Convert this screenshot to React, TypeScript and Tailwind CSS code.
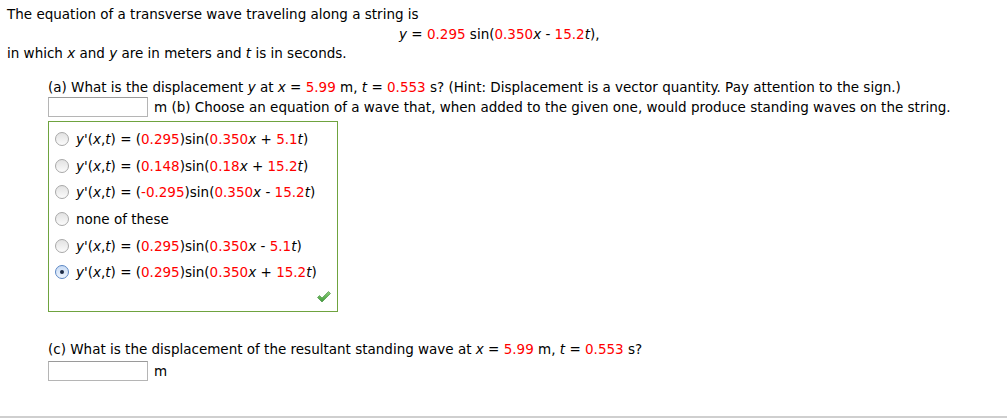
import React from "react";

const R = ({ children }: { children: React.ReactNode }) => (
  <span className="text-[#ff0000]">{children}</span>
);
const I = ({ children }: { children: React.ReactNode }) => <i>{children}</i>;

function Radio({ checked }: { checked?: boolean }) {
  return (
    <span
      className={
        "relative inline-block h-[14px] w-[14px] shrink-0 rounded-full border " +
        (checked
          ? "border-[#5a86c4] bg-gradient-to-b from-[#c9dcf5] to-[#eef4fc]"
          : "border-[#a8a8a8] bg-gradient-to-b from-[#e2e2e2] to-[#fbfbfb]")
      }
    >
      {checked && (
        <span className="absolute left-[4px] top-[4px] h-[4px] w-[4px] rounded-full bg-[#1d2b44]" />
      )}
    </span>
  );
}

const Yp = () => (
  <>
    <I>y</I>'(<I>x</I>,<I>t</I>) ={" "}
  </>
);

const options: { node: React.ReactNode; checked?: boolean }[] = [
  {
    node: (
      <>
        <Yp />(<R>0.295</R>)sin(<R>0.350</R>
        <I>x</I> + <R>5.1</R>
        <I>t</I>)
      </>
    ),
  },
  {
    node: (
      <>
        <Yp />(<R>0.148</R>)sin(<R>0.18</R>
        <I>x</I> + <R>15.2</R>
        <I>t</I>)
      </>
    ),
  },
  {
    node: (
      <>
        <Yp />(<R>-0.295</R>)sin(<R>0.350</R>
        <I>x</I> - <R>15.2</R>
        <I>t</I>)
      </>
    ),
  },
  { node: <>none of these</> },
  {
    node: (
      <>
        <Yp />(<R>0.295</R>)sin(<R>0.350</R>
        <I>x</I> - <R>5.1</R>
        <I>t</I>)
      </>
    ),
  },
  {
    node: (
      <>
        <Yp />(<R>0.295</R>)sin(<R>0.350</R>
        <I>x</I> + <R>15.2</R>
        <I>t</I>)
      </>
    ),
    checked: true,
  },
];

function Check() {
  return (
    <svg width="14" height="12" viewBox="0 0 14 12">
      <defs>
        <linearGradient id="ck" x1="0" y1="0" x2="0" y2="1">
          <stop offset="0" stopColor="#8fd07a" />
          <stop offset="1" stopColor="#3f9a3a" />
        </linearGradient>
      </defs>
      <path
        d="M0.5 6.5 L2.5 4.5 L5 7 L11.5 0.5 L13.5 2.5 L5 11 Z"
        fill="url(#ck)"
        stroke="#3d8a37"
        strokeWidth="0.6"
      />
    </svg>
  );
}

function AnswerBox() {
  return (
    <span className="inline-block h-[20px] w-[100px] shrink-0 border border-[#b5b5b5] border-t-[#9a9a9a] bg-white" />
  );
}

export default function App() {
  return (
    <div
      className="relative h-[420px] w-[1007px] overflow-hidden bg-white text-[13.5px] text-black"
      style={{ fontFamily: '"DejaVu Sans", Verdana, sans-serif' }}
    >
      <div className="pl-[7px]">
        <div className="mt-[6px] h-[16px] leading-[16px]">
          The equation of a transverse wave traveling along a string is
        </div>
        <div className="mt-[4px] h-[16px] pl-[392px] leading-[16px]">
          <I>y</I> = <R>0.295</R> sin(<R>0.350</R>
          <I>x</I> - <R>15.2</R>
          <I>t</I>),
        </div>
        <div className="mt-[3px] h-[16px] leading-[16px]">
          in which <I>x</I> and <I>y</I> are in meters and <I>t</I> is in seconds.
        </div>
      </div>

      <div className="pl-[48px]">
        <div className="mt-[18px] h-[16px] leading-[16px]">
          (a) What is the displacement <I>y</I> at <I>x</I> = <R>5.99</R> m, <I>t</I> ={" "}
          <R>0.553</R> s? (Hint: Displacement is a vector quantity. Pay attention to the sign.)
        </div>
        <div className="mt-[2px] flex h-[20px] items-center gap-[6px]">
          <AnswerBox />
          <span className="whitespace-nowrap leading-[16px]">
            m (b) Choose an equation of a wave that, when added to the given one, would produce
            standing waves on the string.
          </span>
        </div>

        <div className="mt-[4px] flex h-[191px] w-[290px] flex-col border border-[#6fa33f] pt-[4px]">
          {options.map((o, i) => (
            <div key={i} className="flex h-[26.6px] items-center gap-[7px] pl-[6px] leading-[16px]">
              <Radio checked={o.checked} />
              <span className="whitespace-nowrap">{o.node}</span>
            </div>
          ))}
          <div className="mt-auto flex justify-end pb-[8px] pr-[6px]">
            <Check />
          </div>
        </div>

        <div className="mt-[29px] h-[16px] leading-[16px]">
          (c) What is the displacement of the resultant standing wave at <I>x</I> ={" "}
          <R>5.99</R> m, <I>t</I> = <R>0.553</R> s?
        </div>
        <div className="mt-[4px] flex h-[20px] items-center gap-[6px]">
          <AnswerBox />
          <span className="leading-[16px]">m</span>
        </div>
      </div>

      <div className="absolute bottom-[2px] left-0 h-[2px] w-full bg-[#cfcfcf]" />
    </div>
  );
}
